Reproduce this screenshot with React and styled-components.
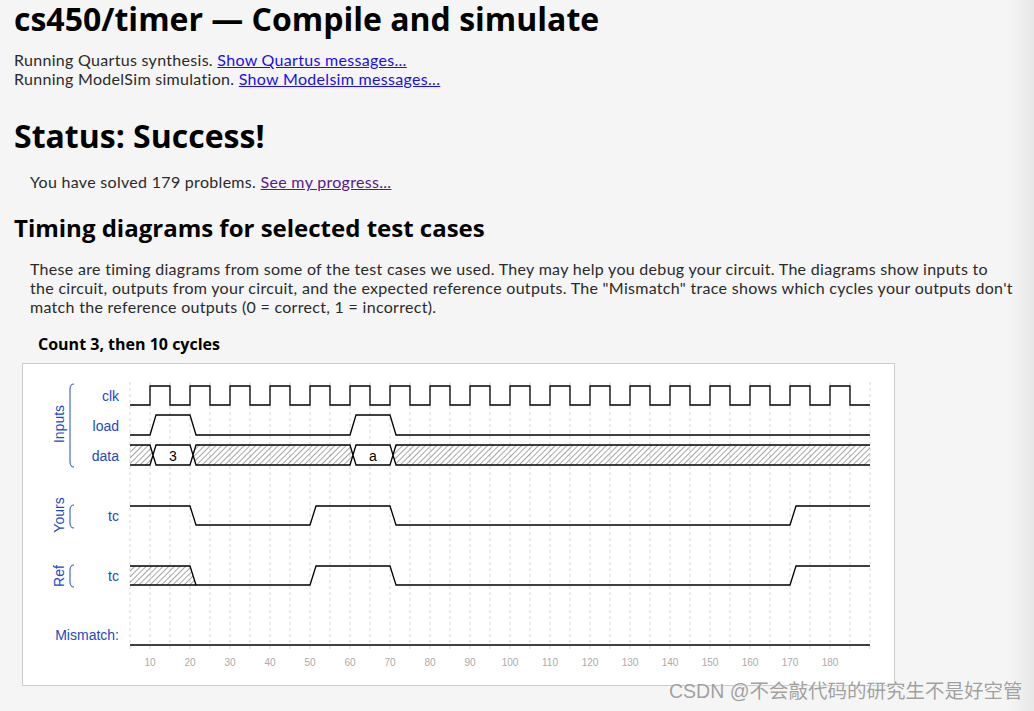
import React from 'react';
import styled, { createGlobalStyle } from 'styled-components';

const GlobalStyle = createGlobalStyle`
  html, body {
    margin: 0;
    padding: 0;
  }
  body {
    background: linear-gradient(to right, #f5f5f5 calc(100% - 26px), #e8e8e8);
    color: #2a2a2a;
    font-family: Lato, 'Open Sans', sans-serif;
    min-height: 711px;
  }
`;

const Page = styled.div`
  display: flex;
  flex-direction: column;
  align-items: flex-start;
  padding: 0 20px 0 14px;
`;

const Heading = styled.h1`
  margin: ${(p) => p.$top}px 0 0 0;
  font-family: 'Open Sans', sans-serif;
  font-weight: 700;
  font-size: ${(p) => p.$size}px;
  line-height: ${(p) => p.$lh}px;
  color: #000;
`;

const Log = styled.div`
  margin-top: 12px;
  font-size: 16px;
  line-height: 19px;
  letter-spacing: 0.3px;
  color: #2a2a2a;
`;

const Text = styled.p`
  margin: ${(p) => p.$top}px 0 0 ${(p) => p.$indent}px;
  font-size: 16px;
  line-height: 19px;
  letter-spacing: 0.3px;
  color: #2a2a2a;
`;

const Link = styled.a`
  color: ${(p) => (p.$visited ? '#551a8b' : '#1a0dee')};
  text-decoration: underline;
  cursor: pointer;
`;

const CaseTitle = styled.h4`
  margin: 17px 0 0 24px;
  font-family: 'Open Sans', sans-serif;
  font-weight: 700;
  font-size: 16px;
  line-height: 22px;
  color: #000;
`;

const DiagramBox = styled.div`
  margin: 8px 0 0 8px;
  width: 871px;
  height: 321px;
  border: 1px solid #cccccc;
  background: #fff;
  svg {
    display: block;
  }
`;

const Watermark = styled.div`
  position: absolute;
  left: 669px;
  top: 678px;
  font-family: 'Liberation Sans', 'Noto Sans CJK SC', sans-serif;
  font-size: 19.5px;
  line-height: 26px;
  color: #a0a0a0;
  text-shadow: 0 0 1px #fff, 0 0 1px #fff;
  white-space: nowrap;
`;

const BLUE = '#2148cc';
const X0 = 130;
const X1 = 870;

const clkPath = () => {
  let d = `M${X0},406 L150,406`;
  for (let x = 150; x < X1; x += 40) {
    d += ` L${x},387 L${x + 20},387 L${x + 20},406 L${Math.min(x + 40, X1)},406`;
  }
  return d;
};

// bus segment; l/r = start of the crossing, null for the open ends of the trace
const busPoints = (l, r, top, bot) => {
  const mid = (top + bot) / 2;
  const pts = [];
  if (l !== null) pts.push([l + 3, mid]);
  pts.push(l === null ? [X0, top] : [l + 6, top], r === null ? [X1, top] : [r, top]);
  if (r !== null) pts.push([r + 3, mid]);
  pts.push(r === null ? [X1, bot] : [r, bot], l === null ? [X0, bot] : [l + 6, bot]);
  return pts;
};

const busEdge = (l, r, y, mid) =>
  `M${l === null ? X0 : l + 3},${l === null ? y : mid} ` +
  (l === null ? '' : `L${l + 6},${y} `) +
  `L${r === null ? X1 : r},${y}` +
  (r === null ? '' : ` L${r + 3},${mid}`);

// the square ends of the trace are left open
const busOutline = (l, r, top, bot) => {
  const mid = (top + bot) / 2;
  return `${busEdge(l, r, top, mid)} ${busEdge(l, r, bot, mid)}`;
};

const dataSegs = [
  { l: null, r: 150, v: null },
  { l: 150, r: 190, v: '3' },
  { l: 190, r: 350, v: null },
  { l: 350, r: 390, v: 'a' },
  { l: 390, r: null, v: null },
];

const gridX = [];
for (let x = X0; x <= X1; x += 20) gridX.push(x);

const ticks = [];
for (let t = 10; t <= 180; t += 10) ticks.push(t);

const bracket = (y0, y1) =>
  `M74,${y0} Q70,${y0} 70,${y0 + 5} L70,${y1 - 5} Q70,${y1} 74,${y1}`;

const FONT = 'Liberation Sans, Arial, sans-serif';

const SigLabel = ({ y, children }) => (
  <text x={119} y={y + 5} textAnchor="end" fontFamily={FONT} fontSize="14" fill={BLUE}>
    {children}
  </text>
);

const GroupLabel = ({ y, children }) => (
  <text
    x={0}
    y={0}
    transform={`translate(64,${y}) rotate(-90)`}
    textAnchor="middle"
    fontFamily={FONT}
    fontSize="14"
    fill={BLUE}
  >
    {children}
  </text>
);

const TimingDiagram = () => (
  <svg width="871" height="321" viewBox="23 365 871 321">
    <defs>
      <pattern id="hatch" width="4" height="4" patternUnits="userSpaceOnUse" patternTransform="rotate(45)">
        <line x1="0" y1="0" x2="0" y2="4" stroke="#3a3a3a" strokeWidth="0.9" />
      </pattern>
    </defs>

    {gridX.map((x) => (
      <line key={x} x1={x} y1={383} x2={x} y2={652} stroke="#d6d6d6" strokeWidth="1" strokeDasharray="3,3" />
    ))}

    <path d={bracket(385, 468)} fill="none" stroke={BLUE} strokeWidth="1" />
    <path d={bracket(506, 529)} fill="none" stroke={BLUE} strokeWidth="1" />
    <path d={bracket(566, 588)} fill="none" stroke={BLUE} strokeWidth="1" />
    <GroupLabel y={425}>Inputs</GroupLabel>
    <GroupLabel y={516}>Yours</GroupLabel>
    <GroupLabel y={577}>Ref</GroupLabel>

    <SigLabel y={397}>clk</SigLabel>
    <SigLabel y={427}>load</SigLabel>
    <SigLabel y={457}>data</SigLabel>
    <SigLabel y={517}>tc</SigLabel>
    <SigLabel y={577}>tc</SigLabel>
    <SigLabel y={636}>Mismatch:</SigLabel>

    <g fill="none" stroke="#000" strokeWidth="1.3">
      <path d={clkPath()} />
      <path d="M130,436 L150,436 L156,416 L190,416 L196,436 L350,436 L356,416 L390,416 L396,436 L870,436" />
      <path d="M130,507 L190,507 L196,526 L310,526 L316,507 L390,507 L396,526 L790,526 L796,507 L870,507" />
      <polygon points="130,567 190,567 196,586 130,586" fill="url(#hatch)" stroke="none" />
      <path d="M130,567 L190,567 L196,586 L310,586 L316,567 L390,567 L396,586 L790,586 L796,567 L870,567" />
      <path d="M130,586 L196,586" />
      <path d="M130,646 L870,646" />
    </g>

    {dataSegs.map((s, i) => (
      <g key={i}>
        <polygon
          points={busPoints(s.l, s.r, 446, 466).map((p) => p.join(',')).join(' ')}
          fill={s.v ? '#fff' : 'url(#hatch)'}
          stroke="none"
        />
        <path d={busOutline(s.l, s.r, 446, 466)} fill="none" stroke="#000" strokeWidth="1.3" />
        {s.v && (
          <text x={(s.l + s.r + 6) / 2} y={462} textAnchor="middle" fontFamily={FONT} fontSize="14" fill="#000">
            {s.v}
          </text>
        )}
      </g>
    ))}

    {ticks.map((t) => (
      <text key={t} x={110 + 4 * t} y={667} textAnchor="middle" fontFamily={FONT} fontSize="10" fill="#aaa">
        {t}
      </text>
    ))}
  </svg>
);

const App = () => {
  return (
    <>
      <GlobalStyle />
      <Page>
        <Heading $top={0} $size={32} $lh={38}>
          cs450/timer — Compile and simulate
        </Heading>
        <Log>
          Running Quartus synthesis. <Link>Show Quartus messages...</Link>
          <br />
          Running ModelSim simulation. <Link>Show Modelsim messages...</Link>
        </Log>
        <Heading as="h2" $top={29} $size={32} $lh={38}>
          Status: Success!
        </Heading>
        <Text $top={17} $indent={16}>
          You have solved 179 problems. <Link $visited>See my progress...</Link>
        </Text>
        <Heading as="h3" $top={22} $size={24} $lh={30}>
          Timing diagrams for selected test cases
        </Heading>
        <Text $top={16} $indent={16}>
          These are timing diagrams from some of the test cases we used. They may help you debug your circuit. The
          diagrams show inputs to the circuit, outputs from your circuit, and the expected reference outputs. The
          "Mismatch" trace shows which cycles your outputs don't match the reference outputs (0 = correct, 1 =
          incorrect).
        </Text>
        <CaseTitle>Count 3, then 10 cycles</CaseTitle>
        <DiagramBox>
          <TimingDiagram />
        </DiagramBox>
      </Page>
      <Watermark>CSDN @不会敲代码的研究生不是好空管</Watermark>
    </>
  );
};

export default App;
